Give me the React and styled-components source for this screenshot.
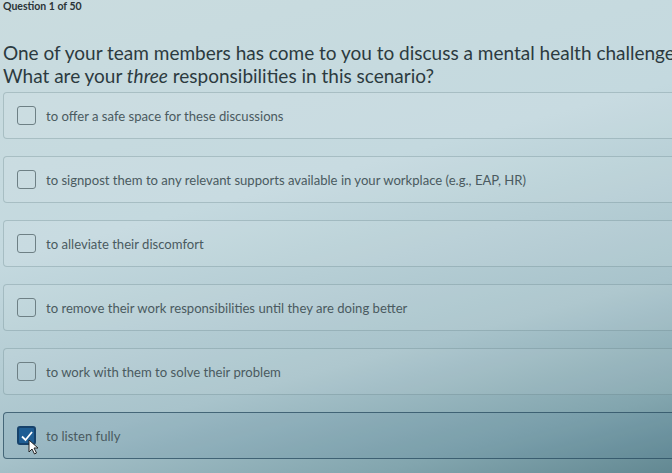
import React from "react";
import styled, { createGlobalStyle } from "styled-components";

const GlobalStyle = createGlobalStyle`
  html, body {
    margin: 0;
    padding: 0;
    height: 100%;
    overflow: hidden;
  }
  body {
    font-family: Lato, "Open Sans", sans-serif;
  }
  #root {
    height: 100%;
  }
`;

const options = [
  { text: "to offer a safe space for these discussions" },
  { text: "to signpost them to any relevant supports available in your workplace (e.g., EAP, HR)" },
  { text: "to alleviate their discomfort" },
  { text: "to remove their work responsibilities until they are doing better" },
  { text: "to work with them to solve their problem" },
  { text: "to listen fully", checked: true },
];

function App() {
  return (
    <Page>
      <GlobalStyle />
      <Counter>Question 1 of 50</Counter>
      <Prompt>
        <Line>One of your team members has come to you to discuss a mental health challenge.</Line>
        <Line>
          What are your <em>three</em> responsibilities in this scenario?
        </Line>
      </Prompt>
      <Options>
        {options.map((o) => (
          <Option key={o.text} checked={o.checked}>
            <Box checked={o.checked}>
              {o.checked && (
                <svg width="14" height="12" viewBox="0 0 14 12">
                  <path d="M2 6.5 L5.5 10 L12 2" fill="none" stroke="#fff" strokeWidth="1.8" />
                </svg>
              )}
            </Box>
            <Label>{o.text}</Label>
            {o.checked && (
              <Cursor width="11" height="16" viewBox="0 0 11 16">
                <path d="M1 1 L1 13 L4 10 L6.5 15 L8.5 14 L6 9 L10 9 Z" fill="#fff" stroke="#222" strokeWidth="1" />
              </Cursor>
            )}
          </Option>
        ))}
      </Options>
    </Page>
  );
}

const Page = styled.div`
  width: 100vw;
  height: 100%;
  overflow: hidden;
  box-sizing: border-box;
  padding: 0 0 0 3px;
  background: linear-gradient(165deg, #cadcdf 0%, #c4d9df 40%, #a8c3cb 70%, #82a5ae 88%, #628892 100%);
  color: #2f3d42;
`;

const Counter = styled.div`
  font-size: 10.5px;
  font-weight: 700;
  line-height: 12px;
  color: #2b3437;
`;

const Prompt = styled.div`
  margin-top: 29px;
  font-size: 19px;
  line-height: 23px;
  color: #2c3a40;
  white-space: nowrap;
`;

const Line = styled.div`
  em {
    font-style: italic;
  }
`;

const Options = styled.div`
  margin-top: 5px;
  width: 760px;
  display: flex;
  flex-direction: column;
  gap: 17px;
`;

const Option = styled.div`
  position: relative;
  height: 47px;
  box-sizing: border-box;
  display: flex;
  align-items: center;
  gap: 10px;
  padding-left: 13px;
  border: 1px solid ${(p) => (p.checked ? "rgba(40, 75, 95, 0.75)" : "rgba(80, 110, 120, 0.28)")};
  border-radius: 4px;
  background: ${(p) => (p.checked ? "rgba(70, 120, 150, 0.14)" : "rgba(255, 255, 255, 0.07)")};
`;

const Box = styled.div`
  width: 19px;
  height: 19px;
  box-sizing: border-box;
  flex: none;
  border-radius: 3px;
  display: flex;
  align-items: center;
  justify-content: center;
  border: ${(p) => (p.checked ? "2px solid #16426b" : "1.5px solid #6e8085")};
  background: ${(p) => (p.checked ? "#1f5e94" : "transparent")};
`;

const Label = styled.span`
  font-size: 13.1px;
  color: #4a5a60;
  white-space: nowrap;
`;

const Cursor = styled.svg`
  position: absolute;
  left: 24px;
  top: 26px;
`;

export default App;
